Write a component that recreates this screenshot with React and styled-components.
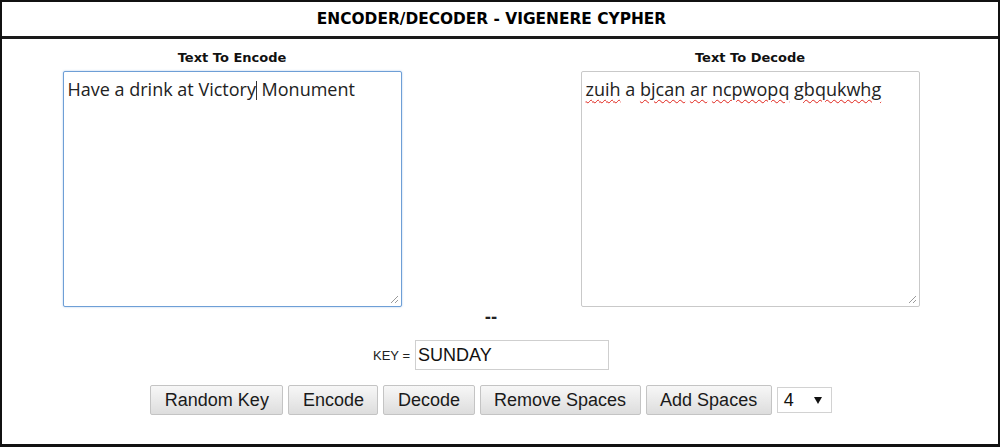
import React from 'react';
import styled, { createGlobalStyle } from 'styled-components';

const GlobalStyle = createGlobalStyle`
  html, body {
    margin: 0;
    padding: 0;
    background: #fff;
  }
  body {
    width: 1000px;
    height: 448px;
    overflow: hidden;
  }
  * { box-sizing: border-box; }
`;

const Frame = styled.div`
  width: 1000px;
  height: 447px;
  border: 2px solid #111;
  border-bottom-width: 3px;
  display: flex;
  flex-direction: column;
  background: #fff;
`;

const Header = styled.header`
  height: 37px;
  border-bottom: 3px solid #1a1a1a;
  display: flex;
  align-items: center;
  justify-content: center;
  padding-right: 17px;
  font-family: "DejaVu Sans", Verdana, sans-serif;
  font-weight: bold;
  font-size: 15.4px;
  color: #000;
`;

const Body = styled.main`
  flex: 1;
  display: flex;
  flex-direction: column;
  align-items: center;
  padding: 11px 18px 0 0;
`;

const Panels = styled.div`
  display: flex;
  gap: 179px;
`;

const Panel = styled.section`
  width: 339px;
  display: flex;
  flex-direction: column;
  align-items: center;
  gap: 6px;
`;

const Label = styled.div`
  font-family: "DejaVu Sans", Verdana, sans-serif;
  font-weight: bold;
  font-size: 13px;
  line-height: 15px;
  color: #111;
`;

const TextBox = styled.div`
  position: relative;
  width: 339px;
  height: 236px;
  padding: 5px 4px;
  background: #fff;
  border: 1px solid ${({ focused }) => (focused ? '#6e9fd6' : '#c9c9c9')};
  border-radius: 2px;
  box-shadow: ${({ focused }) => (focused ? '0 0 2px rgba(90, 150, 215, 0.55)' : 'none')};
  font-family: "Open Sans", "Segoe UI", sans-serif;
  font-size: 18px;
  color: #222;
  white-space: pre-wrap;
`;

const Misspelled = styled.span`
  text-decoration: underline wavy #e0241b;
  text-decoration-thickness: 1px;
  text-underline-offset: 3px;
`;

const Caret = styled.span`
  display: inline-block;
  width: 0;
  height: 19px;
  border-left: 1px solid #333;
  vertical-align: -4px;
`;

const Grip = styled.svg`
  position: absolute;
  right: 2px;
  bottom: 2px;
`;

const Separator = styled.div`
  margin-top: 1px;
  font-family: "DejaVu Sans", Verdana, sans-serif;
  font-weight: bold;
  font-size: 15px;
  line-height: 18px;
  color: #222;
`;

const KeyRow = styled.div`
  margin-top: 14px;
  display: flex;
  align-items: center;
  gap: 5px;
  font-family: "Liberation Sans", Arial, sans-serif;
`;

const KeyLabel = styled.label`
  font-size: 13px;
  color: #222;
`;

const KeyInput = styled.input`
  width: 194px;
  height: 30px;
  padding: 0 2px;
  border: 1px solid #cfcfcf;
  font-family: "Liberation Sans", Arial, sans-serif;
  font-size: 18px;
  color: #111;
  outline: none;
`;

const Buttons = styled.div`
  margin-top: 15px;
  display: flex;
  align-items: center;
  gap: 5px;
`;

const Button = styled.button`
  height: 30px;
  padding: 0 13.5px;
  border: 1px solid #c4c4c4;
  border-radius: 2px;
  background: linear-gradient(#f7f7f7, #dddddd);
  font-family: "Liberation Sans", Arial, sans-serif;
  font-size: 18px;
  color: #1a1a1a;
  cursor: pointer;
`;

const Dropdown = styled.div`
  width: 55px;
  height: 26px;
  padding: 0 9px 0 6px;
  border: 1px solid #d2d2d2;
  background: #fff;
  display: flex;
  align-items: center;
  justify-content: space-between;
  font-family: "Liberation Sans", Arial, sans-serif;
  font-size: 18px;
  color: #111;
`;

const Resize = () => (
  <Grip width="9" height="9" viewBox="0 0 9 9">
    <path d="M8 1 L1 8 M8 5 L5 8" stroke="#9a9a9a" strokeWidth="1" fill="none" />
  </Grip>
);

const cipherWords = ['zuih', 'a', 'bjcan', 'ar', 'ncpwopq', 'gbqukwhg'];

export default function App() {
  return (
    <>
      <GlobalStyle />
      <Frame>
        <Header>ENCODER/DECODER - VIGENERE CYPHER</Header>
        <Body>
          <Panels>
            <Panel>
              <Label>Text To Encode</Label>
              <TextBox focused>
                Have a drink at Victory<Caret /> Monument
                <Resize />
              </TextBox>
            </Panel>
            <Panel>
              <Label>Text To Decode</Label>
              <TextBox>
                {cipherWords.map((w, i) => (
                  <React.Fragment key={i}>
                    {i > 0 && ' '}
                    {w.length > 1 ? <Misspelled>{w}</Misspelled> : w}
                  </React.Fragment>
                ))}
                <Resize />
              </TextBox>
            </Panel>
          </Panels>
          <Separator>--</Separator>
          <KeyRow>
            <KeyLabel htmlFor="key">KEY =</KeyLabel>
            <KeyInput id="key" defaultValue="SUNDAY" />
          </KeyRow>
          <Buttons>
            <Button>Random Key</Button>
            <Button>Encode</Button>
            <Button>Decode</Button>
            <Button>Remove Spaces</Button>
            <Button>Add Spaces</Button>
            <Dropdown>
              <span>4</span>
              <svg width="8" height="7" viewBox="0 0 8 7">
                <path d="M0 0 H8 L4 7 Z" fill="#111" />
              </svg>
            </Dropdown>
          </Buttons>
        </Body>
      </Frame>
    </>
  );
}
